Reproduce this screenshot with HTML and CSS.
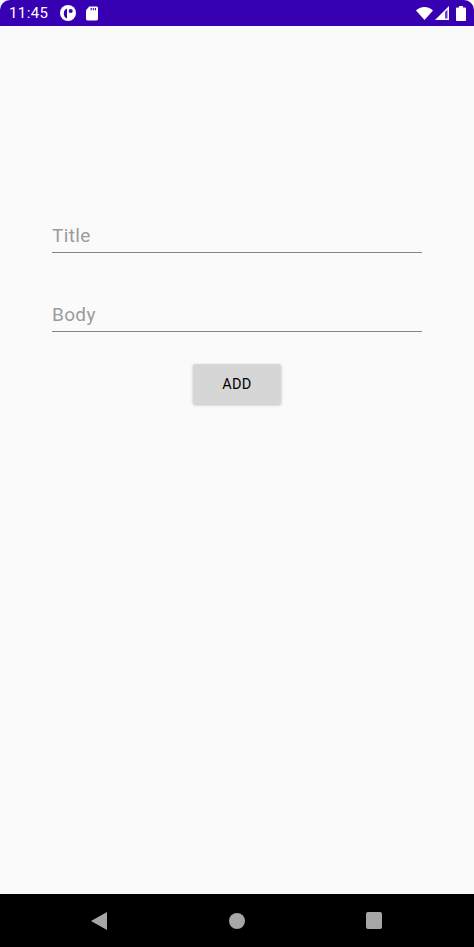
FILE: index.html
```html
<!DOCTYPE html>
<html lang="en">
<head>
<meta charset="UTF-8">
<title>Add post</title>
<link rel="stylesheet" href="styles.css">
</head>
<body>

<header class="status-bar">
  <span class="clock">11:45</span>
  <svg class="status-icon" width="16" height="16" viewBox="0 0 16 16">
    <circle cx="8" cy="8" r="8" fill="#fff"/>
    <path d="M7 3.5V13.5C5 13 3.8 11 3.8 8.5S5 4 7 3.5Z" fill="#3700b3"/>
    <circle cx="10.7" cy="6" r="2" fill="#3700b3"/>
  </svg>
  <svg class="status-icon sd" width="12" height="15" viewBox="0 0 13 15">
    <path d="M3.5 0H11.5A1.5 1.5 0 0 1 13 1.5V13.5A1.5 1.5 0 0 1 11.5 15H1.5A1.5 1.5 0 0 1 0 13.5V4Z" fill="#fff"/>
    <path d="M5 1.5h1.2v2.5H5zM7.3 1.5h1.2v2.5H7.3zM9.6 1.5h1.2v2.5H9.6z" fill="#3700b3"/>
  </svg>
  <span class="spacer"></span>
  <svg class="wifi" width="17" height="13" viewBox="0 0 17 13">
    <path d="M0 3.6C2.2 1.4 5.2 0 8.5 0s6.3 1.4 8.5 3.6L8.5 13Z" fill="#fff"/>
  </svg>
  <svg class="signal" width="14" height="14" viewBox="0 0 14 14">
    <path d="M14 0V14H0Z" fill="#fff"/>
    <path d="M12.5 3.5V12.5H10V6Z" fill="#3700b3" opacity=".75"/>
  </svg>
  <svg class="battery" width="10" height="15" viewBox="0 0 10 15">
    <path d="M3 0H7V1.5H9A1 1 0 0 1 10 2.5V14A1 1 0 0 1 9 15H1A1 1 0 0 1 0 14V2.5A1 1 0 0 1 1 1.5H3Z" fill="#fff"/>
  </svg>
</header>

<main class="content">
  <div class="field"><input class="field-input" type="text" placeholder="Title"></div>
  <div class="field"><input class="field-input" type="text" placeholder="Body"></div>
  <button class="add-btn">ADD</button>
</main>

<nav class="nav-bar">
  <svg width="16" height="18" viewBox="0 0 16 18"><path d="M16 0V18L0 9Z" fill="#a6a6a6"/></svg>
  <svg width="16" height="16" viewBox="0 0 16 16"><circle cx="8" cy="8" r="8" fill="#a6a6a6"/></svg>
  <svg width="16" height="17" viewBox="0 0 16 17"><rect width="16" height="17" rx="2" fill="#a6a6a6"/></svg>
</nav>

</body>
</html>
```

FILE: styles.css
```css
* { margin: 0; padding: 0; box-sizing: border-box; }
html, body { height: 100%; }
body { display: flex; flex-direction: column; height: 947px; overflow: hidden; background-color: #fafafa; font-family: Roboto, "Liberation Sans", sans-serif; }

.status-bar { display: flex; align-items: center; height: 26px; padding: 0 8px 0 9px; border-radius: 10px 10px 0 0; background-color: #3700b3; color: #fff; }
.clock { font-size: 15px; letter-spacing: .4px; margin-right: 12px; }
.status-icon { flex: none; }
.status-icon.sd { margin-left: 10px; }
.spacer { flex: 1; }
.wifi { margin-right: 2px; }
.signal { margin-right: 7px; }

.content { flex: 1; display: flex; flex-direction: column; padding: 197px 52px 0; }
.field { height: 79px; }
.field-input { display: block; width: 100%; height: 30px; padding-bottom: 5px; border: none; border-bottom: 1.5px solid #858585; background: transparent; outline: none; font-family: inherit; font-size: 19px; letter-spacing: .35px; color: #222; }
.field-input::placeholder { color: #9b9b9b; opacity: 1; }
.add-btn { align-self: center; width: 88px; height: 40px; margin-top: -17px; border: none; border-radius: 2px; background-color: #d6d6d6; box-shadow: 0 1px 3px rgba(0,0,0,.25); font-family: inherit; font-size: 14.5px; font-weight: 400; letter-spacing: .3px; color: #000; }

.nav-bar { display: flex; align-items: center; justify-content: space-between; height: 53px; padding: 0 92px 0 91px; background-color: #000; }
```
